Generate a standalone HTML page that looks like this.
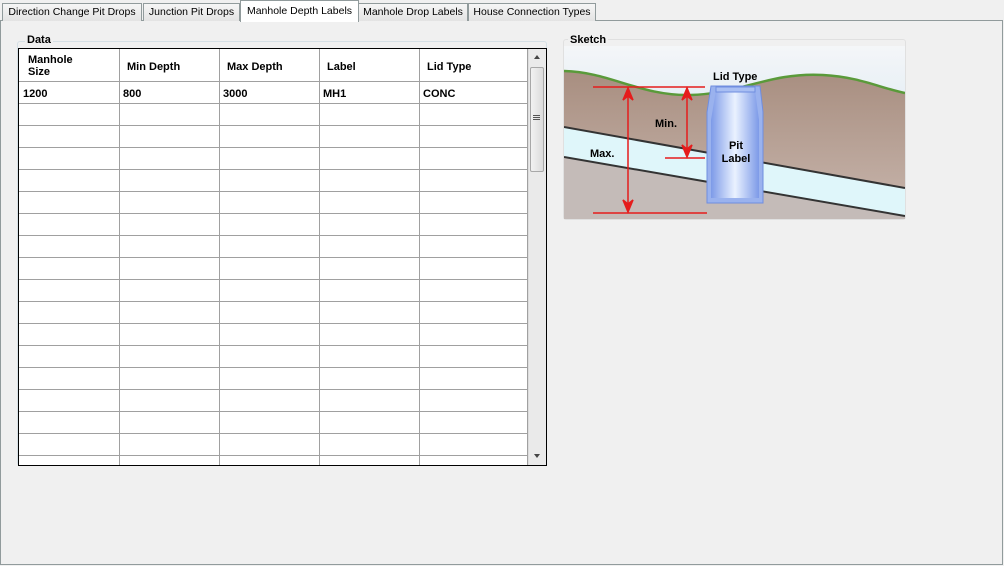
<!DOCTYPE html>
<html><head><meta charset="utf-8"><style>
*{margin:0;padding:0;box-sizing:border-box}
body{width:1004px;height:566px;background:#f0f0f0;position:relative;overflow:hidden;font-family:"Liberation Sans",sans-serif;font-size:11px;color:#000}
.a{position:absolute}
.tab{position:absolute;top:3px;height:18px;border:1px solid #919b9c;border-bottom:none;background:linear-gradient(#f6f6f6,#e3e3e3);line-height:16px;text-align:center;font-size:10.5px;white-space:nowrap;overflow:hidden}
.b{font-weight:bold}
.grp{position:absolute;border:1px solid #d5dfe5;border-radius:3px}
.lbl{position:absolute;background:#f0f0f0;font-weight:bold;padding:0 2px}
</style></head><body>
<div class="a" style="left:0;top:20px;width:1003px;height:545px;border:1px solid #919b9c;background:#f0f0f0"></div>
<div class="tab" style="left:2px;width:140px">Direction Change Pit Drops</div>
<div class="tab" style="left:143px;width:97px">Junction Pit Drops</div>
<div class="tab" style="left:358px;width:110px">Manhole Drop Labels</div>
<div class="tab" style="left:468px;width:128px">House Connection Types</div>
<div class="tab" style="left:240px;top:0;height:22px;width:119px;background:#fff;line-height:20px">Manhole Depth Labels</div>

<div class="grp" style="left:17px;top:41px;width:530px;height:425px"></div>
<div class="lbl" style="left:25px;top:34px">Data</div>
<div class="a" style="left:18px;top:48px;width:529px;height:418px;border:1px solid #000;background:#fff;overflow:hidden">
 <div class="a" style="left:0;top:33px;width:509px;height:384px;background:repeating-linear-gradient(to bottom,transparent 0 21px,#a0a0a0 21px 22px)"></div>
 <div class="a" style="left:0;top:0;width:509px;height:417px;background:linear-gradient(to right,transparent 100px,#a0a0a0 100px 101px,transparent 101px 200px,#a0a0a0 200px 201px,transparent 201px 300px,#a0a0a0 300px 301px,transparent 301px 400px,#a0a0a0 400px 401px,transparent 401px 508px,#a0a0a0 508px)"></div>
 <div class="a" style="left:0;top:0;width:509px;height:33px;border-bottom:1px solid #a0a0a0"></div>
 <div class="a b" style="left:9px;top:5px;line-height:12px">Manhole<br>Size</div>
 <div class="a b" style="left:108px;top:12px">Min Depth</div>
 <div class="a b" style="left:208px;top:12px">Max Depth</div>
 <div class="a b" style="left:308px;top:12px">Label</div>
 <div class="a b" style="left:408px;top:12px">Lid Type</div>
 <div class="a b" style="left:4px;top:39px">1200</div>
 <div class="a b" style="left:104px;top:39px">800</div>
 <div class="a b" style="left:204px;top:39px">3000</div>
 <div class="a b" style="left:304px;top:39px">MH1</div>
 <div class="a b" style="left:404px;top:39px">CONC</div>
 <div class="a" style="left:509px;top:0;width:18px;height:417px;background:#eaeaea;border-left:1px solid #ddd"></div>
 <div class="a" style="left:515px;top:6px;width:0;height:0;border-left:3px solid transparent;border-right:3px solid transparent;border-bottom:4px solid #444"></div>
 <div class="a" style="left:515px;top:405px;width:0;height:0;border-left:3px solid transparent;border-right:3px solid transparent;border-top:4px solid #444"></div>
 <div class="a" style="left:511px;top:18px;width:14px;height:105px;border:1px solid #a8a8a8;border-radius:2px;background:linear-gradient(to right,#f2f2f2,#dcdcdc)"></div>
 <div class="a" style="left:514px;top:66px;width:7px;height:6px;background:repeating-linear-gradient(#555 0 1px,transparent 1px 2px)"></div>
</div>

<div class="grp" style="left:563px;top:39px;width:343px;height:181px;border-color:#e0e0e0"></div>
<div class="lbl" style="left:568px;top:34px">Sketch</div>
<svg class="a" style="left:564px;top:46px" width="341" height="173" viewBox="564 46 341 173">
 <defs>
  <linearGradient id="sky" x1="0" y1="0" x2="0" y2="1"><stop offset="0" stop-color="#f4f6f8"/><stop offset="1" stop-color="#c9dff0"/></linearGradient>
  <linearGradient id="soil" x1="0" y1="0" x2="0" y2="1"><stop offset="0" stop-color="#a88e80"/><stop offset="1" stop-color="#c8b6ad"/></linearGradient>
  <linearGradient id="pit" x1="0" y1="0" x2="1" y2="0"><stop offset="0" stop-color="#7d9ae8"/><stop offset=".5" stop-color="#eaf2ff"/><stop offset="1" stop-color="#7d9ae8"/></linearGradient>
 </defs>
 <rect x="564" y="46" width="341" height="173" fill="url(#sky)"/>
 <path d="M564 71 C610 72 640 96 690 95 C740 94 770 72 823 75 C860 77 880 88 905 93 L905 219 L564 219Z" fill="url(#soil)"/>
 <path d="M564 127 L905 188 L905 216 L564 157Z" fill="#dff6fa"/>
 <path d="M564 157 L905 216 L905 219 L564 219Z" fill="#c4bbb8"/>
 <path d="M564 71 C610 72 640 96 690 95 C740 94 770 72 823 75 C860 77 880 88 905 93" fill="none" stroke="#5a9a3a" stroke-width="2.5"/>
 <path d="M564 127 L905 188" stroke="#333" stroke-width="2"/>
 <path d="M564 157 L905 216" stroke="#333" stroke-width="2"/>
 <path d="M711 86 L760 86 L763 112 L763 203 L707 203 L707 112Z" fill="#9ab2ee" stroke="#6f8ddf"/>
 <path d="M716 90 L755 90 L759 120 L759 198 L711 198 L711 120Z" fill="url(#pit)"/>
 <rect x="716" y="87" width="39" height="5" fill="#a9bff3" stroke="#6f8ddf"/>
 <g stroke="#e51c1c" stroke-width="1.5" fill="#e51c1c">
  <line x1="593" y1="87" x2="705" y2="87"/>
  <line x1="593" y1="213" x2="707" y2="213"/>
  <line x1="665" y1="158" x2="705" y2="158"/>
  <line x1="628" y1="90" x2="628" y2="210"/>
  <line x1="687" y1="90" x2="687" y2="155"/>
  <path d="M628 88 L623 100 L628 96 L633 100Z"/>
  <path d="M628 212 L623 200 L628 204 L633 200Z"/>
  <path d="M687 88 L682 100 L687 96 L692 100Z"/>
  <path d="M687 157 L682 145 L687 149 L692 145Z"/>
 </g>
 <g font-family="Liberation Sans,sans-serif" font-size="11" font-weight="bold" fill="#000">
  <text x="713" y="80">Lid Type</text>
  <text x="655" y="127">Min.</text>
  <text x="590" y="157">Max.</text>
  <text x="736" y="149" text-anchor="middle">Pit</text>
  <text x="736" y="162" text-anchor="middle">Label</text>
 </g>
</svg>
</body></html>
